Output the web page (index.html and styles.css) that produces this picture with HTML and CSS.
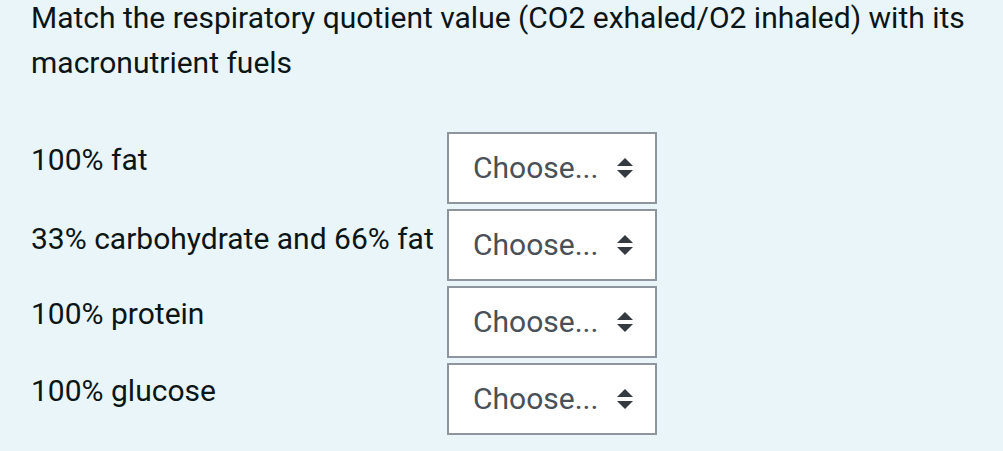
FILE: index.html
```html
<!DOCTYPE html>
<html lang="en">
<head>
<meta charset="utf-8">
<title>Match question</title>
<link rel="stylesheet" href="styles.css">
</head>
<body>
<div class="formulation">
  <p class="qtext">Match the respiratory quotient value (CO2 exhaled/O2 inhaled) with its macronutrient fuels</p>
  <div class="answer">
    <div class="row">
      <div class="label">100% fat</div>
      <div class="control">
        <select class="choose"><option>Choose...</option></select>
        <svg class="arrow" width="16" height="20" viewBox="0 0 4 5"><path fill="#343a40" d="M2 0L0 2h4zm0 5L0 3h4z"/></svg>
      </div>
    </div>
    <div class="row">
      <div class="label label-low">33% carbohydrate and 66% fat</div>
      <div class="control">
        <select class="choose"><option>Choose...</option></select>
        <svg class="arrow" width="16" height="20" viewBox="0 0 4 5"><path fill="#343a40" d="M2 0L0 2h4zm0 5L0 3h4z"/></svg>
      </div>
    </div>
    <div class="row">
      <div class="label">100% protein</div>
      <div class="control">
        <select class="choose"><option>Choose...</option></select>
        <svg class="arrow" width="16" height="20" viewBox="0 0 4 5"><path fill="#343a40" d="M2 0L0 2h4zm0 5L0 3h4z"/></svg>
      </div>
    </div>
    <div class="row">
      <div class="label">100% glucose</div>
      <div class="control">
        <select class="choose"><option>Choose...</option></select>
        <svg class="arrow" width="16" height="20" viewBox="0 0 4 5"><path fill="#343a40" d="M2 0L0 2h4zm0 5L0 3h4z"/></svg>
      </div>
    </div>
  </div>
</div>
</body>
</html>
```

FILE: styles.css
```css
html, body {
  margin: 0;
  padding: 0;
  background: #e9f5f8;
}

body {
  font-family: Roboto, "Liberation Sans", Arial, sans-serif;
  font-size: 30px;
  line-height: 45px;
  color: #0b1518;
  height: 451px;
  overflow: hidden;
}

.formulation {
  padding: 0 30px 0 31px;
}

.qtext {
  margin: -5px 0 0 0;
  width: 940px;
}

.answer {
  margin-top: 47px;
  display: flex;
  flex-direction: column;
  gap: 5px;
}

.row {
  display: grid;
  grid-template-columns: 416px 210px;
  align-items: start;
}

.label {
  padding-top: 5px;
  white-space: nowrap;
}

.label-low {
  padding-top: 7px;
}

.control {
  position: relative;
  width: 210px;
  height: 72px;
}

.choose {
  -webkit-appearance: none;
  appearance: none;
  box-sizing: border-box;
  width: 210px;
  height: 72px;
  margin: 0;
  padding: 0 24px;
  border: 2px solid #8f959e;
  border-radius: 0;
  background: #fff;
  color: #495057;
  font-family: Roboto, "Liberation Sans", Arial, sans-serif;
  font-size: 30px;
  line-height: 68px;
}

.arrow {
  position: absolute;
  right: 24px;
  top: 26px;
  pointer-events: none;
}
```
